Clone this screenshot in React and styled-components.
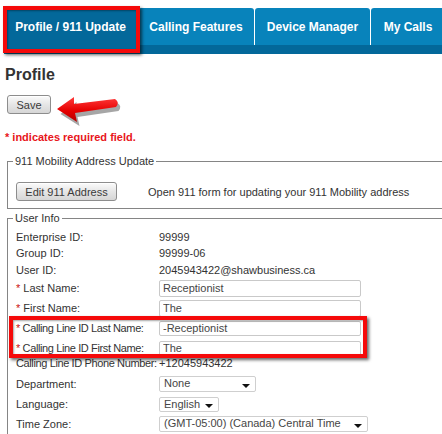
import React from "react";
import styled, { createGlobalStyle } from "styled-components";

const GlobalStyle = createGlobalStyle`
  html, body {
    margin: 0;
    padding: 0;
    background: #ffffff;
    overflow: hidden;
  }
  body {
    font-family: "Liberation Sans", Arial, sans-serif;
    font-size: 11px;
    color: #333333;
  }
`;

const Page = styled.div`
  position: relative;
  width: 700px;
  padding-top: 8px;
`;

const TabBar = styled.ul`
  display: flex;
  gap: 1px;
  margin: 0 0 0 4px;
  padding: 0;
  list-style: none;
  border-bottom: 9px solid #03689a;
`;

const Tab = styled.li`
  flex: none;
  width: ${p => p.$w}px;
  height: 37px;
  display: flex;
  align-items: center;
  justify-content: center;
  background: ${p => (p.$active ? "#03689a" : "#0883bb")};
  border-radius: 3px 3px 0 0;
  color: #ffffff;
  font-size: 12px;
  font-weight: bold;
  white-space: nowrap;
`;

const Content = styled.div`
  padding: 0 5px;
`;

const Heading = styled.h1`
  margin: 11px 0 0;
  font-size: 16px;
  line-height: 19px;
  font-weight: bold;
  color: #333333;
`;

const GreyButton = styled.button`
  display: block;
  flex: none;
  width: ${p => p.$w}px;
  height: 19px;
  margin: ${p => p.$m || 0};
  padding: 0;
  border: 1px solid #8d8d8d;
  border-radius: 3px;
  background: linear-gradient(#fbfbfb, #e6e6e6 50%, #d6d6d6);
  box-shadow: inset 0 1px 0 #ffffff;
  font-family: inherit;
  font-size: 11px;
  color: #3a3a3a;
`;

const Required = styled.p`
  margin: 17px 0 0;
  line-height: 13px;
  font-weight: bold;
  color: #e8151b;
`;

const Group = styled.fieldset`
  margin: ${p => p.$mt}px 0 0 2px;
  padding: 0 0 ${p => p.$pb}px 8px;
  border: 1px solid #858585;
  min-width: 0;
`;

const Legend = styled.legend`
  margin-left: -3px;
  padding: 0 2px;
  line-height: 13px;
  color: #333333;
`;

const MobilityRow = styled.div`
  display: flex;
  align-items: center;
  gap: 31px;
  margin-top: 14px;
`;

const Rows = styled.div`
  padding-top: 4px;
`;

const Row = styled.div`
  display: flex;
  align-items: center;
  height: ${p => p.$h}px;
  line-height: 13px;
`;

/* the phone number line sits tight under the caller-id inputs */
const PhoneRow = styled(Row)`
  align-items: flex-start;
  & > * {
    margin-top: -1px;
  }
`;

const Label = styled.div`
  flex: none;
  width: 143px;
  white-space: nowrap;
  letter-spacing: ${p => (p.$tight ? "-0.38px" : "0")};
`;

const Star = styled.span`
  color: #cc1111;
`;

const Value = styled.div`
  white-space: nowrap;
`;

const TextInput = styled.input`
  box-sizing: border-box;
  width: 202px;
  height: ${p => p.$h}px;
  margin: 0;
  padding: 0 3px;
  border: 1px solid #c9c9c9;
  border-radius: 2px;
  font-family: inherit;
  font-size: 11px;
  color: #454545;
  background: #ffffff;
`;

const SelectBox = styled.div`
  position: relative;
  box-sizing: border-box;
  width: ${p => p.$w}px;
  height: ${p => p.$h}px;
  padding: 0 4px;
  border: 1px solid #cfcfcf;
  border-radius: 2px;
  line-height: ${p => p.$h - 3}px;
  color: #454545;
  white-space: nowrap;
`;

const Caret = styled.span`
  position: absolute;
  right: 5px;
  bottom: 3px;
  width: 0;
  height: 0;
  border-left: 4px solid transparent;
  border-right: 4px solid transparent;
  border-top: 4px solid #111111;
`;

const Highlight = styled.div`
  position: absolute;
  left: ${p => p.$x}px;
  top: ${p => p.$y}px;
  width: ${p => p.$w}px;
  height: ${p => p.$h}px;
  box-sizing: border-box;
  border: 4px solid #f50a0a;
  box-shadow: 2px 2px 3px rgba(0, 0, 0, 0.6), inset 1px 1px 2px rgba(0, 0, 0, 0.35);
  pointer-events: none;
`;

const PointerArrow = styled.svg`
  position: absolute;
  left: 50px;
  top: 92px;
`;

const Select = ({ w, h, children }) => (
  <SelectBox $w={w} $h={h}>
    {children}
    <Caret />
  </SelectBox>
);

export default function App() {
  return (
    <Page>
      <GlobalStyle />
      <TabBar>
        <Tab $w={133} $active>Profile / 911 Update</Tab>
        <Tab $w={116}>Calling Features</Tab>
        <Tab $w={115}>Device Manager</Tab>
        <Tab $w={74}>My Calls</Tab>
      </TabBar>

      <Content>
        <Heading>Profile</Heading>
        <GreyButton $w={44} $m="11px 0 0 2px">Save</GreyButton>
        <Required>* indicates required field.</Required>

        <Group $mt={11} $pb={7}>
          <Legend>911 Mobility Address Update</Legend>
          <MobilityRow>
            <GreyButton $w={101}>Edit 911 Address</GreyButton>
            <span>Open 911 form for updating your 911 Mobility address</span>
          </MobilityRow>
        </Group>

        <Group $mt={3} $pb={40}>
          <Legend>User Info</Legend>
          <Rows>
            <Row $h={16}>
              <Label>Enterprise ID:</Label>
              <Value>99999</Value>
            </Row>
            <Row $h={17}>
              <Label>Group ID:</Label>
              <Value>99999-06</Value>
            </Row>
            <Row $h={16}>
              <Label>User ID:</Label>
              <Value>2045943422@shawbusiness.ca</Value>
            </Row>
            <Row $h={20}>
              <Label><Star>*</Star> Last Name:</Label>
              <TextInput $h={17} defaultValue="Receptionist" />
            </Row>
            <Row $h={20}>
              <Label><Star>*</Star> First Name:</Label>
              <TextInput $h={17} defaultValue="The" />
            </Row>
            <Row $h={20}>
              <Label $tight><Star>*</Star> Calling Line ID Last Name:</Label>
              <TextInput $h={15} defaultValue="-Receptionist" />
            </Row>
            <Row $h={20}>
              <Label $tight><Star>*</Star> Calling Line ID First Name:</Label>
              <TextInput $h={15} defaultValue="The" />
            </Row>
            <PhoneRow $h={16}>
              <Label $tight>Calling Line ID Phone Number:</Label>
              <Value>+12045943422</Value>
            </PhoneRow>
            <Row $h={20}>
              <Label>Department:</Label>
              <Select w={97} h={16}>None</Select>
            </Row>
            <Row $h={20}>
              <Label>Language:</Label>
              <Select w={60} h={15}>English</Select>
            </Row>
            <Row $h={20}>
              <Label>Time Zone:</Label>
              <Select w={209} h={16}>(GMT-05:00) (Canada) Central Time</Select>
            </Row>
          </Rows>
        </Group>
      </Content>

      {/* annotation overlays */}
      <Highlight $x={3} $y={6} $w={137} $h={47} />
      <Highlight $x={9} $y={316} $w={358} $h={42} />
      <PointerArrow width="76" height="36" viewBox="0 0 76 36">
        <defs>
          <linearGradient id="arrowFill" x1="0" y1="0" x2="0" y2="1">
            <stop offset="0" stopColor="#ff3b3b" />
            <stop offset="0.55" stopColor="#e60000" />
            <stop offset="1" stopColor="#b50000" />
          </linearGradient>
        </defs>
        <path
          d="M9,20 L25,8 L25,14 L66,9 Q71,12 67,17 L26,23 L28,32 Z"
          fill="#000"
          opacity="0.35"
          transform="translate(1.5,2)"
        />
        <path
          d="M7,17 L24,5 L24,12 L65,7 Q70,10 66,15 L25,21 L27,30 Z"
          fill="url(#arrowFill)"
        />
      </PointerArrow>
    </Page>
  );
}
